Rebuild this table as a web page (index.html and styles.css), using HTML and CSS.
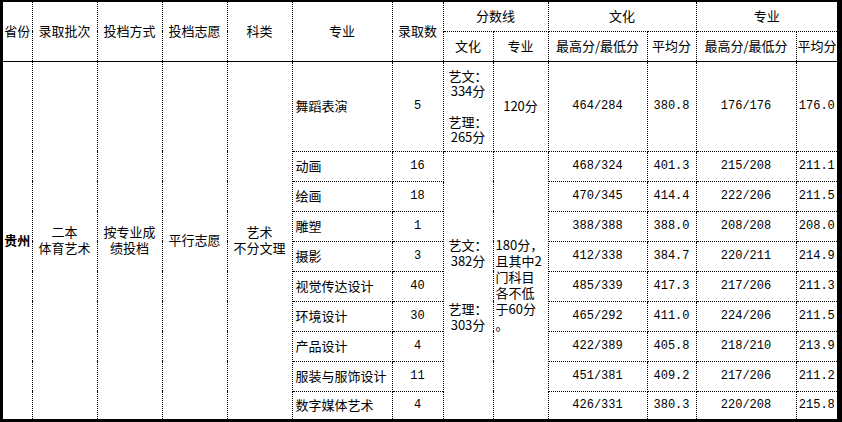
FILE: index.html
```html
<!DOCTYPE html>
<html lang="zh-CN">
<head>
<meta charset="utf-8">
<title>贵州 录取分数</title>
<link rel="stylesheet" href="styles.css">
</head>
<body>
<div class="frame">
<table class="grid">
<colgroup>
<col class="c29"><col class="c65"><col class="c65"><col class="c65"><col class="c65"><col class="c100"><col class="c51"><col class="c50"><col class="c55"><col class="c99"><col class="c49"><col class="c100"><col class="c41">
</colgroup>
<thead>
<tr class="hr1">
<th rowspan="2" class="hb">省份</th><th rowspan="2" class="hb">录取批次</th><th rowspan="2" class="hb">投档方式</th><th rowspan="2" class="hb">投档志愿</th><th rowspan="2" class="hb">科类</th><th rowspan="2" class="hb">专业</th><th rowspan="2" class="hb">录取数</th>
<th colspan="2">分数线</th><th colspan="2">文化</th><th colspan="2">专业</th>
</tr>
<tr class="hr2">
<th class="hb">文化</th><th class="hb">专业</th><th class="hb">最高分/最低分</th><th class="hb">平均分</th><th class="hb">最高分/最低分</th><th class="hb">平均分</th>
</tr>
</thead>
<tbody>
<tr class="r90">
<td rowspan="10" class="prov">贵州</td>
<td rowspan="10" class="multi">二本<br>体育艺术</td>
<td rowspan="10" class="multi">按专业成<br>绩投档</td>
<td rowspan="10" class="multi">平行志愿</td>
<td rowspan="10" class="multi">艺术<br>不分文理</td>
<td class="major">舞蹈表演</td><td class="n">5</td>
<td class="lines"><div class="blk">艺文：<br>334分</div><div class="blk gap">艺理：<br>265分</div></td>
<td>120分</td>
<td class="n">464/284</td><td class="n">380.8</td><td class="n">176/176</td><td class="n">176.0</td>
</tr>
<tr class="r30">
<td class="major">动画</td><td class="n">16</td>
<td rowspan="9" class="tall">艺文：<br>382分<br><br><br>艺理：<br>303分</td>
<td rowspan="9" class="tall left">180分，<br>且其中2<br>门科目<br>各不低<br>于60分<br>。</td>
<td class="n">468/324</td><td class="n">401.3</td><td class="n">215/208</td><td class="n">211.1</td>
</tr>
<tr class="r30"><td class="major">绘画</td><td class="n">18</td><td class="n">470/345</td><td class="n">414.4</td><td class="n">222/206</td><td class="n">211.5</td></tr>
<tr class="r30"><td class="major">雕塑</td><td class="n">1</td><td class="n">388/388</td><td class="n">388.0</td><td class="n">208/208</td><td class="n">208.0</td></tr>
<tr class="r30"><td class="major">摄影</td><td class="n">3</td><td class="n">412/338</td><td class="n">384.7</td><td class="n">220/211</td><td class="n">214.9</td></tr>
<tr class="r30"><td class="major">视觉传达设计</td><td class="n">40</td><td class="n">485/339</td><td class="n">417.3</td><td class="n">217/206</td><td class="n">211.3</td></tr>
<tr class="r30"><td class="major">环境设计</td><td class="n">30</td><td class="n">465/292</td><td class="n">411.0</td><td class="n">224/206</td><td class="n">211.5</td></tr>
<tr class="r30"><td class="major">产品设计</td><td class="n">4</td><td class="n">422/389</td><td class="n">405.8</td><td class="n">218/210</td><td class="n">213.9</td></tr>
<tr class="r30"><td class="major">服装与服饰设计</td><td class="n">11</td><td class="n">451/381</td><td class="n">409.2</td><td class="n">217/206</td><td class="n">211.2</td></tr>
<tr class="r28"><td class="major">数字媒体艺术</td><td class="n">4</td><td class="n">426/331</td><td class="n">380.3</td><td class="n">220/208</td><td class="n">215.8</td></tr>
</tbody>
</table>
</div>
</body>
</html>
```
FILE: styles.css
```css
html, body {
  margin: 0;
  padding: 0;
  background: #ffffff;
}
body {
  font-family: "Noto Sans CJK SC", "Liberation Sans", sans-serif;
  font-size: 13px;
  color: #000000;
}
.frame {
  width: 842px;
  height: 422px;
  box-sizing: border-box;
  border-style: solid;
  border-color: #000000;
  border-width: 2px 5px 3px 3px;
  overflow: hidden;
}
.grid {
  table-layout: fixed;
  border-collapse: collapse;
  border-style: hidden;
  width: 834px;
  height: 417px;
}
.c29 { width: 29px; }
.c65 { width: 65px; }
.c100 { width: 100px; }
.c51 { width: 51px; }
.c50 { width: 50px; }
.c55 { width: 55px; }
.c99 { width: 99px; }
.c49 { width: 49px; }
.c41 { width: 41px; }
.grid th,
.grid td {
  border: 1px dotted #000000;
  padding: 0 1px;
  text-align: center;
  vertical-align: middle;
  font-weight: normal;
  line-height: 16px;
  white-space: nowrap;
  overflow: hidden;
}
.grid th.hb {
  border-bottom: 1px solid #000000;
}
.hr1 { height: 29px; }
.hr2 { height: 30px; }
.r90 { height: 90px; }
.r30 { height: 30px; }
.r28 { height: 28px; }
.grid td.prov {
  font-weight: bold;
  padding: 0;
}
.grid td.major {
  text-align: left;
  padding-left: 3px;
}
.grid td.n {
  font-family: "Liberation Mono", "DejaVu Sans Mono", monospace;
  font-size: 12px;
}
.grid td.tall {
  line-height: 16px;
}
.grid td.left {
  text-align: left;
  padding-left: 2px;
}
.blk {
  line-height: 15px;
}
.blk.gap {
  margin-top: 16px;
}
.lines {
  padding-top: 4px;
}
```
